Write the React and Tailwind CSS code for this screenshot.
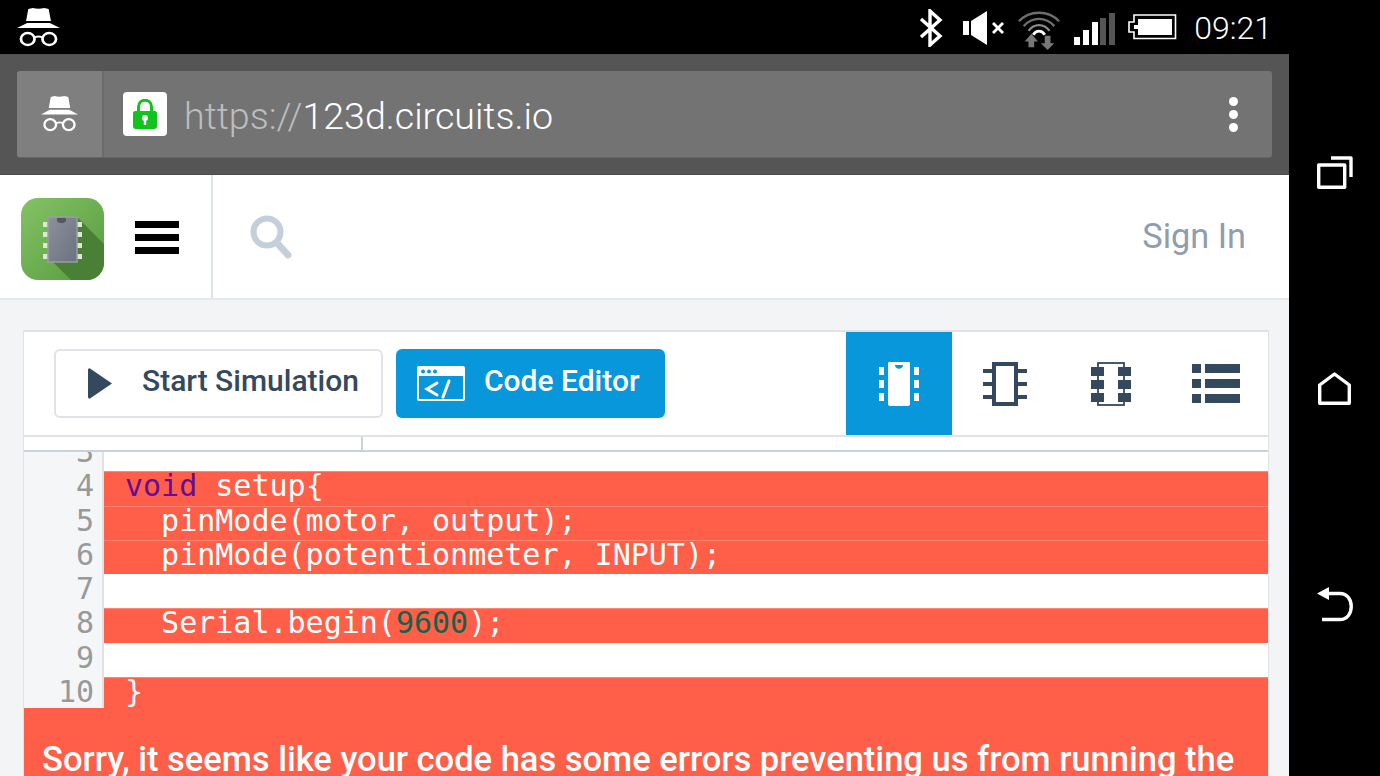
const Incognito = ({ className }) => (
  <svg viewBox="0 0 38 39" preserveAspectRatio="none" className={className} fill="none">
    <path d="M10 1 L14 0 C17 1 21 1 24 0 L28 1 L30 13 L8 13 Z" fill="#fff" />
    <path d="M9 15 H29 L38 20 H0 Z" fill="#fff" />
    <circle cx="9.5" cy="31" r="6" stroke="#fff" strokeWidth="2.4" />
    <circle cx="28.5" cy="31" r="6" stroke="#fff" strokeWidth="2.4" />
    <path d="M15 30 C17 28 21 28 23 30" stroke="#fff" strokeWidth="2" />
  </svg>
);

const StatusIcons = () => (
  <div className="flex items-center">
    <svg viewBox="0 0 24 38" className="w-[24px] h-[38px] mt-[2px]" fill="none" stroke="#fff" strokeWidth="3.4">
      <path d="M2 10 L21 27 L11 36 V2 L21 11 L2 28" />
    </svg>
    <svg viewBox="0 0 42 34" className="w-[42px] h-[34px] ml-[20px] mt-[2px]" fill="#fff">
      <path d="M0 10 H6 V24 H0 Z" />
      <path d="M8 10 L24 0 V34 L8 24 Z" />
      <path d="M29 13 L31 11 L35 15 L39 11 L41 13 L37 17 L41 21 L39 23 L35 19 L31 23 L29 21 L33 17 Z" />
    </svg>
    <svg viewBox="0 0 46 44" className="w-[44px] h-[44px] ml-[12px] mt-[4px]" fill="none">
      <path d="M2 14 C13 2 33 2 44 14" stroke="#6e6e6e" strokeWidth="2.4" />
      <path d="M7 19 C16 9 30 9 39 19" stroke="#6e6e6e" strokeWidth="2.4" />
      <path d="M12 24 C18 16 28 16 34 24" stroke="#8a8a8a" strokeWidth="2.4" />
      <path d="M17 28 C20 23 26 23 29 28" stroke="#fff" strokeWidth="3" />
      <path d="M15 27 L22 35 H18 V41 H12 V35 H8 Z" fill="#777" />
      <path d="M29 29 H35 V37 H39 L32 44 L25 37 H29 Z" fill="#777" />
    </svg>
    <svg viewBox="0 0 41 32" className="w-[41px] h-[32px] ml-[13px] mt-[4px]">
      <rect x="0" y="24" width="6" height="8" fill="#fff" />
      <rect x="9" y="17" width="6" height="15" fill="#fff" />
      <rect x="18" y="9" width="6" height="23" fill="#fff" />
      <rect x="26" y="5" width="6" height="27" fill="#555" />
      <rect x="35" y="0" width="6" height="32" fill="#555" />
    </svg>
    <svg viewBox="0 0 49 26" className="w-[49px] h-[26px] ml-[13px]" fill="none">
      <path d="M6 1 H47.5 V24.5 H6 V18 H1 V8 H6 Z" stroke="#fff" strokeWidth="1.6" />
      <path d="M10 5 H44 V21 H10 V15 H6 V11 H10 Z" fill="#fff" />
    </svg>
    <span className="ml-[17px] mr-[19px] mt-[2px] text-[32px] leading-none font-light text-white">09:21</span>
  </div>
);

const Logo = () => (
  <svg viewBox="0 0 83 82" className="w-[83px] h-[82px] ml-[21px] mt-[5px] shrink-0">
    <defs>
      <linearGradient id="lg" x1="0" y1="0" x2="1" y2="1">
        <stop offset="0" stopColor="#84c364" />
        <stop offset="1" stopColor="#569a3f" />
      </linearGradient>
      <linearGradient id="chip" x1="0" y1="0" x2="1" y2="1">
        <stop offset="0" stopColor="#8c919b" />
        <stop offset="1" stopColor="#6c7180" />
      </linearGradient>
      <clipPath id="lc"><rect width="83" height="82" rx="17" /></clipPath>
    </defs>
    <rect width="83" height="82" rx="17" fill="url(#lg)" />
    <path d="M56 19 L83 46 V82 H50 L28 60 Z" fill="#4a7f36" clipPath="url(#lc)" />
    {[24, 34, 45, 56].map((y) => (
      <g key={y}>
        <rect x="22" y={y} width="5" height="5" fill="#dfe6d8" />
        <rect x="56" y={y} width="5" height="5" fill="#dfe6d8" />
      </g>
    ))}
    <rect x="27" y="19" width="29" height="45" fill="url(#chip)" stroke="#9a9da3" strokeWidth="1.5" />
    <path d="M36 20 H45 V23 C43 26 38 26 36 23 Z" fill="#55595f" />
  </svg>
);

const rows = [
  { n: 3, text: "", bg: false },
  { n: 4, bg: true, text: <><span className="text-[#670c96]">void</span> setup{"{"}</> },
  { n: 5, bg: true, text: "  pinMode(motor, output);" },
  { n: 6, bg: true, text: "  pinMode(potentionmeter, INPUT);" },
  { n: 7, text: "", bg: false },
  { n: 8, bg: true, text: <>  Serial.begin(<span className="text-[#14624a]">9600</span>);</> },
  { n: 9, text: "", bg: false },
  { n: 10, bg: true, text: "}" },
];

export default function App() {
  return (
    <div className="flex w-[1380px] h-[776px] overflow-hidden bg-black font-['Roboto',sans-serif]">
      <div className="w-[1289px] flex flex-col shrink-0">
        <div className="h-[54px] flex items-center justify-between shrink-0 bg-black">
          <Incognito className="w-[43px] h-[39px] ml-[17px]" />
          <div className="-mr-[2px]">
            <StatusIcons />
          </div>
        </div>

        <div className="h-[121px] shrink-0 bg-[#555555] pt-[17px] pl-[17px] pr-[17px] border-b border-[#4a4a4a]">
          <div className="h-[87px] flex rounded-[3px] bg-[#737373] border-b border-[#666]">
            <div className="w-[87px] flex items-center justify-center bg-[#7f7f7f] border-r-2 border-[#6b6b6b] rounded-l-[3px]">
              <Incognito className="w-[37px] h-[36px]" />
            </div>
            <div className="flex-1 flex items-center pl-[19px] pr-[34px]">
              <div className="w-[44px] h-[44px] rounded-[4px] bg-white flex items-center justify-center">
                <svg viewBox="0 0 24 30" className="w-[24px] h-[30px]">
                  <path d="M5.5 13 V8 C5.5 -1 18.5 -1 18.5 8 V13" fill="none" stroke="#12c31e" strokeWidth="3" />
                  <path d="M2 12 H22 C23 12 24 13 24 14 V27 C24 29 23 30 21 30 H3 C1 30 0 29 0 27 V14 C0 13 1 12 2 12 Z" fill="#12c31e" />
                  <circle cx="12" cy="19" r="3" fill="#fff" />
                  <rect x="10.8" y="20" width="2.4" height="6" fill="#fff" />
                </svg>
              </div>
              <div className="ml-[17px] pt-[5px] text-[37.6px] font-light leading-none text-white">
                <span className="text-[#bdbdbd]">https://</span>123d.circuits.io
              </div>
              <div className="ml-auto flex flex-col gap-[4px]">
                <span className="w-[9px] h-[9px] rounded-full bg-white" />
                <span className="w-[9px] h-[9px] rounded-full bg-white" />
                <span className="w-[9px] h-[9px] rounded-full bg-white" />
              </div>
            </div>
          </div>
        </div>

        <div className="flex-1 min-h-0 bg-[#f3f4f6] overflow-hidden">
          <header className="h-[125px] bg-white border-b-2 border-[#e4e7eb] flex items-stretch">
            <div className="w-[213px] shrink-0 flex items-center border-r-2 border-[#dde3ea]">
              <Logo />
              <div className="ml-[31px] w-[44px] flex flex-col gap-[6px] mt-[2px]">
                <span className="h-[7px] bg-black" />
                <span className="h-[7px] bg-black" />
                <span className="h-[7px] bg-black" />
              </div>
            </div>
            <div className="flex-1 flex items-center pl-[37px] pr-[43px] justify-between">
              <svg viewBox="0 0 42 44" className="w-[42px] h-[44px]" fill="none" stroke="#c5cfdb">
                <circle cx="17" cy="17" r="13.5" strokeWidth="6" />
                <path d="M28 29 L38 40" strokeWidth="7" strokeLinecap="round" />
              </svg>
              <span className="text-[34.3px] text-[#8f9dae] leading-none">Sign In</span>
            </div>
          </header>

          <main className="mt-[30px] ml-[23px] w-[1246px] border-x border-t-2 border-[#dfe3e8] bg-white">
            <div className="h-[105px] flex items-center border-b-2 border-[#dfe3e8]">
              <div className="flex items-center pl-[30px] gap-[13px]">
                <button className="w-[329px] h-[69px] rounded-[6px] border-2 border-[#dfe3e8] bg-white flex items-center pl-[32px]">
                  <svg viewBox="0 0 25 31" className="w-[25px] h-[31px]">
                    <path d="M2 0.5 L24 15.5 L2 30.5 C1 31 0 30 0 29 V2 C0 1 1 0 2 0.5 Z" fill="#34495e" />
                  </svg>
                  <span className="ml-[29px] pb-[5px] text-[30px] font-medium text-[#34495e] leading-none">Start Simulation</span>
                </button>
                <button className="w-[269px] h-[69px] rounded-[6px] bg-[#0897da] flex items-center pl-[21px]">
                  <svg viewBox="0 0 48 35" className="w-[48px] h-[35px]" fill="none">
                    <rect x="1" y="1" width="46" height="33" rx="1" stroke="#fff" strokeWidth="2" />
                    <rect x="1" y="1" width="46" height="9" fill="#fff" />
                    <circle cx="6" cy="5.5" r="2" fill="#0897da" />
                    <circle cx="12" cy="5.5" r="2" fill="#0897da" />
                    <circle cx="18" cy="5.5" r="2" fill="#0897da" />
                    <path d="M20 17 L10 23 L20 29" stroke="#fff" strokeWidth="3" strokeLinecap="round" />
                    <path d="M32 15 L26 31" stroke="#fff" strokeWidth="3" strokeLinecap="round" />
                  </svg>
                  <span className="ml-[19px] pb-[5px] text-[30px] font-medium text-white leading-none">Code Editor</span>
                </button>
              </div>
              <div className="ml-auto flex h-full">
                <div className="w-[106px] bg-[#0897da] flex items-center justify-center">
                  <svg viewBox="0 0 40 44" className="w-[40px] h-[44px]" fill="#fff">
                    <path d="M9 1 C9 0 10 0 11 0 H29 C30 0 31 0 31 1 V42 C31 43 30 44 29 44 H11 C10 44 9 43 9 42 Z" />
                    <path d="M16 3 H24 C24 8 16 8 16 3 Z" fill="#0897da" />
                    {[5, 18, 31].map((y) => (
                      <g key={y}>
                        <rect x="0" y={y} width="5" height="8" />
                        <rect x="35" y={y} width="5" height="8" />
                      </g>
                    ))}
                  </svg>
                </div>
                <div className="w-[106px] flex items-center justify-center">
                  <svg viewBox="0 0 44 44" className="w-[44px] h-[44px]" fill="none" stroke="#34495e">
                    <rect x="11" y="2" width="22" height="40" strokeWidth="4" />
                    {[9, 22, 35].map((y) => (
                      <g key={y}>
                        <path d={`M0 ${y} H11`} strokeWidth="4" />
                        <path d={`M33 ${y} H44`} strokeWidth="4" />
                      </g>
                    ))}
                  </svg>
                </div>
                <div className="w-[106px] flex items-center justify-center">
                  <svg viewBox="0 0 40 44" className="w-[40px] h-[44px]" fill="#34495e">
                    <rect x="7" y="1" width="26" height="42" fill="none" stroke="#34495e" strokeWidth="1.8" />
                    {[5, 18, 31].map((y) => (
                      <g key={y}>
                        <rect x="0" y={y} width="13" height="9" />
                        <rect x="27" y={y} width="13" height="9" />
                      </g>
                    ))}
                  </svg>
                </div>
                <div className="w-[104px] flex items-center justify-center">
                  <svg viewBox="0 0 48 40" className="w-[48px] h-[40px]" fill="#34495e">
                    {[0, 15, 30].map((y) => (
                      <g key={y}>
                        <rect x="0" y={y} width="9" height="9" />
                        <rect x="13" y={y} width="35" height="9" />
                      </g>
                    ))}
                  </svg>
                </div>
              </div>
            </div>

            <div className="h-[15px] flex border-b-2 border-[#c8d2dc]">
              <div className="w-[339px] border-r-2 border-[#c8d2dc]" />
            </div>

            <div className="h-[256px] overflow-hidden">
              <div className="-mt-[15px] font-['DejaVu_Sans_Mono',monospace] text-[30px]">
                {rows.map((r) => (
                  <div key={r.n} className="flex h-[34.3px]">
                    <div className="w-[80px] shrink-0 bg-[#f5f6f7] border-r-2 border-[#e0e3e6] pr-[8px] text-right text-[#999999] leading-[30px]">
                      {r.n}
                    </div>
                    <pre
                      className={
                        r.bg
                          ? "flex-1 pl-[21px] text-white leading-[28px] bg-[#ff5f49] border-t border-[#ff8472] font-['DejaVu_Sans_Mono',monospace]"
                          : "flex-1 pl-[21px] bg-white font-['DejaVu_Sans_Mono',monospace]"
                      }
                    >
                      {r.text}
                    </pre>
                  </div>
                ))}
              </div>
            </div>

            <div className="bg-[#ff5f49] pt-[32px] pl-[18px] h-[120px]">
              <p className="text-[34.5px] leading-[38px] font-medium text-white whitespace-nowrap">
                Sorry, it seems like your code has some errors preventing us from running the
              </p>
            </div>
          </main>
        </div>
      </div>

      <aside className="w-[91px] shrink-0 flex flex-col items-center pt-[156px] bg-black">
        <svg viewBox="0 0 36 33" className="w-[36px] h-[33px]" fill="none" stroke="#fff" strokeWidth="3.4" strokeLinejoin="round">
          <rect x="1.7" y="9" width="26" height="22.3" />
          <path d="M14 2 H34 V21" />
        </svg>
        <svg viewBox="0 0 33 33" className="w-[33px] h-[33px] mt-[183px]" fill="none" stroke="#fff" strokeWidth="3.4" strokeLinejoin="round">
          <path d="M1.7 13 L16.5 2 L31.3 13 V31.3 H1.7 Z" />
        </svg>
        <svg viewBox="0 0 36 35" className="w-[36px] h-[35px] mt-[182px]" fill="none" stroke="#fff">
          <path d="M12 0 V13 L0 6.5 Z" fill="#fff" stroke="none" />
          <path d="M11 6.5 H23 C38 6.5 38 32.5 23 32.5 H5" strokeWidth="3.4" />
        </svg>
      </aside>
    </div>
  );
}
